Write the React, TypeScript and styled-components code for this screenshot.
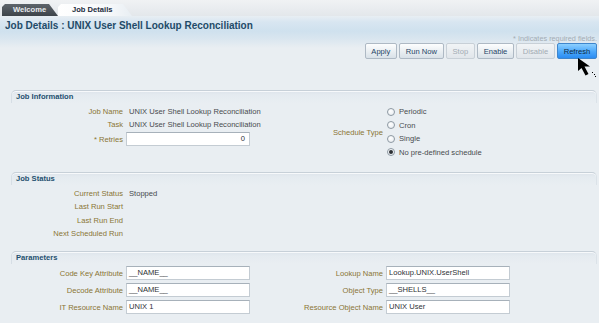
import React from "react";
import styled, { createGlobalStyle } from "styled-components";

const Global = createGlobalStyle`
  html, body { margin: 0; padding: 0; background: #e9eef2; }
  body {
    font-family: "Liberation Sans", Arial, sans-serif;
    font-size: 7.6px;
    width: 599px;
    height: 323px;
    overflow: hidden;
  }
  * { box-sizing: border-box; }
`;

const Page = styled.div`
  position: relative;
  width: 599px;
  height: 323px;
  background: #e9eef2;
`;

const TabStrip = styled.div`
  height: 16px;
  display: flex;
  align-items: flex-end;
  padding-left: 2px;
  background: linear-gradient(#f0f2f4, #e3e7eb);
`;

const Tab = styled.div<{ $active?: boolean }>`
  height: 12px;
  line-height: 12px;
  font-weight: bold;
  font-size: 7.6px;
  white-space: nowrap;
  clip-path: polygon(0 100%, 0 3px, 3px 0, calc(100% - 9px) 0, 100% 100%);
  color: ${(p) => (p.$active ? "#1c2c3c" : "#e8ecf0")};
  background: ${(p) =>
    p.$active
      ? "linear-gradient(90deg, #ffffff 0%, #f6f8fa 70%, #e8eef3 100%)"
      : "linear-gradient(#5d646b, #3e444a)"};
  padding: ${(p) => (p.$active ? "0 18px 0 14px" : "0 11px 0 11px")};
  width: ${(p) => (p.$active ? "74px" : "56px")};
`;

const Header = styled.div`
  background: linear-gradient(
    180deg,
    #e8eef3 0px,
    #d8e6f1 6px,
    #cfe1ee 15px,
    #d8e5ef 22px,
    #e9eef2 32px
  );
`;

const Title = styled.h1`
  margin: 0;
  padding-left: 5px;
  height: 19px;
  line-height: 20px;
  font-size: 10px;
  font-weight: bold;
  color: #1f4b68;
  white-space: nowrap;
`;

const Required = styled.div`
  text-align: right;
  padding-right: 2px;
  height: 8px;
  line-height: 8px;
  font-size: 7.3px;
  color: #a3acb4;
`;

const ButtonRow = styled.div`
  display: flex;
  justify-content: flex-end;
  gap: 2px;
  padding-right: 2px;
`;

const Button = styled.button<{ $variant?: "normal" | "disabled" | "primary" }>`
  height: 16px;
  margin: 0;
  padding: 0 5.75px;
  font-family: inherit;
  font-size: 7.6px;
  border-radius: 2px;
  cursor: default;
  white-space: nowrap;
  border: 1px solid
    ${(p) =>
      p.$variant === "primary" ? "#3f86cc" : p.$variant === "disabled" ? "#c8d0d7" : "#aeb9c4"};
  color: ${(p) =>
    p.$variant === "primary" ? "#0e2a47" : p.$variant === "disabled" ? "#a2abb3" : "#1f4465"};
  background: ${(p) =>
    p.$variant === "primary"
      ? "linear-gradient(#8dd0ff, #4aa7fb 55%, #2b8cf2)"
      : p.$variant === "disabled"
      ? "linear-gradient(#f1f4f6, #e1e6eb)"
      : "linear-gradient(#fdfefe, #e9eef2 55%, #d9e1e8)"};
`;

const Section = styled.section<{ $top: number }>`
  margin: ${(p) => p.$top}px 2px 0 11px;
`;

const SectionHeader = styled.div`
  height: 13px;
  line-height: 12px;
  padding-left: 4px;
  font-weight: bold;
  font-size: 7.6px;
  color: #24506f;
  border: 1px solid #c7d0d8;
  border-bottom: none;
  border-left-color: #d6dee5;
  border-right-color: #dbe2e8;
  border-radius: 5px 5px 0 0;
  box-shadow: inset 0 1px 0 #f7f9fb;
  background: linear-gradient(#dde4eb, #e5ebf0 4px, #e9eef2 12px);
`;

const FormGrid = styled.div<{ $rows: string; $pad: number }>`
  display: grid;
  grid-template-columns: 112px 124px 130px 124px;
  grid-template-rows: ${(p) => p.$rows};
  column-gap: 3px;
  padding-top: ${(p) => p.$pad}px;
  align-items: center;
`;

const Label = styled.div<{ $col?: number; $span?: number }>`
  grid-column: ${(p) => p.$col ?? 1};
  ${(p) => (p.$span ? `grid-row: 1 / span ${p.$span};` : "")}
  text-align: right;
  color: #8a7534;
  white-space: nowrap;
`;

const Value = styled.div`
  grid-column: 2;
  padding-left: 3px;
  color: #484b4e;
  white-space: nowrap;
`;

const Input = styled.div<{ $col?: number; $align?: "left" | "right" }>`
  grid-column: ${(p) => p.$col ?? 2};
  height: 14px;
  line-height: 12px;
  background: #fff;
  border: 1px solid #c4ccd3;
  border-top-color: #a7b1ba;
  padding: 0 4px 0 2px;
  color: #2e3236;
  text-align: ${(p) => p.$align ?? "left"};
  white-space: nowrap;
  overflow: hidden;
`;

const RadioGroup = styled.div`
  grid-column: 4;
  grid-row: 1 / span 4;
  align-self: stretch;
  display: flex;
  flex-direction: column;
  padding-left: 1px;
`;

const RadioItem = styled.label`
  height: 13.5px;
  display: flex;
  align-items: center;
  gap: 4px;
  color: #484b4e;
  white-space: nowrap;
`;

const RadioDot = styled.span<{ $checked?: boolean }>`
  width: 8px;
  height: 8px;
  border-radius: 50%;
  border: 1px solid #8d98a2;
  background: radial-gradient(circle at 40% 35%, #ffffff, #e4e9ee);
  display: flex;
  align-items: center;
  justify-content: center;
  &::after {
    content: "";
    width: 4px;
    height: 4px;
    border-radius: 50%;
    background: ${(p) => (p.$checked ? "#2b2f33" : "transparent")};
  }
`;

const Cursor = styled.svg`
  position: absolute;
  left: 577px;
  top: 57px;
`;

const Radio = ({ label, checked }: { label: string; checked?: boolean }) => (
  <RadioItem>
    <RadioDot $checked={checked} />
    {label}
  </RadioItem>
);

export default function App() {
  return (
    <Page>
      <Global />
      <TabStrip>
        <Tab>Welcome</Tab>
        <Tab $active>Job Details</Tab>
      </TabStrip>
      <Header>
        <Title>Job Details : UNIX User Shell Lookup Reconciliation</Title>
        <Required>* Indicates required fields.</Required>
        <ButtonRow>
          <Button>Apply</Button>
          <Button>Run Now</Button>
          <Button $variant="disabled">Stop</Button>
          <Button>Enable</Button>
          <Button $variant="disabled">Disable</Button>
          <Button $variant="primary">Refresh</Button>
        </ButtonRow>
      </Header>

      <Section $top={31}>
        <SectionHeader>Job Information</SectionHeader>
        <FormGrid $rows="13px 13px 16px 12px" $pad={2}>
          <Label>Job Name</Label>
          <Value>UNIX User Shell Lookup Reconciliation</Value>
          <Label $col={3} $span={4}>Schedule Type</Label>
          <RadioGroup>
            <Radio label="Periodic" />
            <Radio label="Cron" />
            <Radio label="Single" />
            <Radio label="No pre-defined schedule" checked />
          </RadioGroup>
          <Label>Task</Label>
          <Value>UNIX User Shell Lookup Reconciliation</Value>
          <Label>* Retries</Label>
          <Input $align="right">0</Input>
        </FormGrid>
      </Section>

      <Section $top={13}>
        <SectionHeader>Job Status</SectionHeader>
        <FormGrid $rows="repeat(4, 13.33px)" $pad={2}>
          <Label>Current Status</Label>
          <Value>Stopped</Value>
          <Label>Last Run Start</Label>
          <Value />
          <Label>Last Run End</Label>
          <Value />
          <Label>Next Scheduled Run</Label>
          <Value />
        </FormGrid>
      </Section>

      <Section $top={10.5}>
        <SectionHeader>Parameters</SectionHeader>
        <FormGrid $rows="repeat(3, 17px)" $pad={1}>
          <Label>Code Key Attribute</Label>
          <Input>__NAME__</Input>
          <Label $col={3}>Lookup Name</Label>
          <Input $col={4}>Lookup.UNIX.UserShell</Input>
          <Label>Decode Attribute</Label>
          <Input>__NAME__</Input>
          <Label $col={3}>Object Type</Label>
          <Input $col={4}>__SHELLS__</Input>
          <Label>IT Resource Name</Label>
          <Input>UNIX 1</Input>
          <Label $col={3}>Resource Object Name</Label>
          <Input $col={4}>UNIX User</Input>
        </FormGrid>
      </Section>

      <Cursor width="20" height="20" viewBox="0 0 20 20">
        <path d="M1 1 L1 14 L4.5 11 L8.5 18.5 L11.5 17 L7.5 9.5 L13 9.5 Z" fill="#000" />
        <rect x="15" y="15" width="1" height="1" fill="#000" />
        <rect x="17" y="17" width="1" height="1" fill="#000" />
        <rect x="18" y="19" width="1" height="1" fill="#000" />
      </Cursor>
    </Page>
  );
}
